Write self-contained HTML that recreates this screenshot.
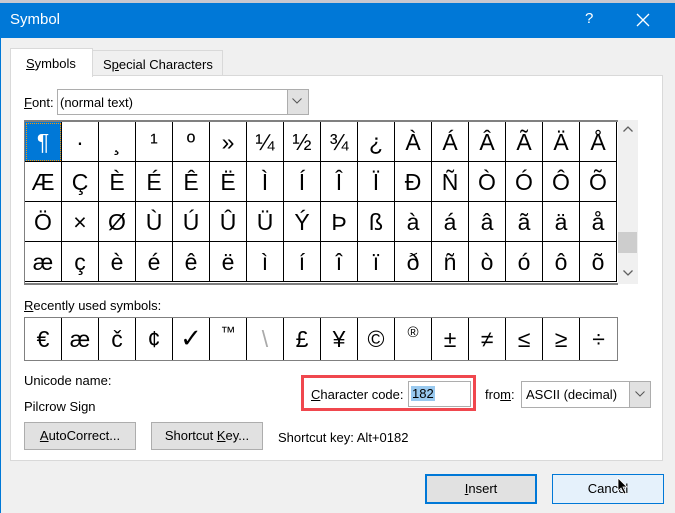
<!DOCTYPE html><html><head><meta charset="utf-8"><style>
*{box-sizing:border-box;margin:0;padding:0}
body{width:675px;height:513px;overflow:hidden;background:#f0f0f0;font-family:"Liberation Sans","DejaVu Sans",sans-serif;font-size:13px;color:#000;position:relative}
.a{position:absolute}
.tb{left:0;top:0;width:675px;height:38px;background:#0078d7;border-top:3px solid #c8c8d0}
.tt{color:#fff;font-size:15px;left:10px;top:11px}
.panel{left:10px;top:75px;width:653px;height:386px;background:#fff;border:1px solid #d9d9d9}
.grid{left:24px;top:120px;border-top:2px solid #808080;border-bottom:2px solid #808080;border-left:1px solid #808080}
.cell{position:absolute;border-right:1px solid #000;border-bottom:1px solid #000;width:37px;height:40px;text-align:center;font-family:"Liberation Sans","DejaVu Sans",sans-serif;font-size:23px;line-height:40px}
.btn{position:absolute;background:#e1e1e1;border:1px solid #adadad;text-align:center;line-height:26px;font-size:13px}
u{text-decoration:underline}
</style></head><body>
<div class="a tb"></div>
<div class="a tt">Symbol</div>
<div class="a" style="left:585px;top:10px;color:#fff;font-size:15px">?</div>
<svg class="a" style="left:636px;top:13px" width="14" height="14"><path d="M1 1L13 13M13 1L1 13" stroke="#fff" stroke-width="1.3"/></svg>
<div class="a" style="left:0;top:38px;width:1px;height:475px;background:#0078d7"></div>
<div class="a" style="left:92px;top:50px;width:131px;height:26px;background:#f0f0f0;border:1px solid #d9d9d9;border-bottom:none"></div>
<div class="a" style="left:103px;top:57px">S<u>p</u>ecial Characters</div>
<div class="a panel"></div>
<div class="a" style="left:10px;top:48px;width:83px;height:29px;background:#fff;border:1px solid #d9d9d9;border-bottom:none"></div>
<div class="a" style="left:26px;top:56px"><u>S</u>ymbols</div>
<div class="a" style="left:24px;top:95px"><u>F</u>ont:</div>
<div class="a" style="left:57px;top:89px;width:252px;height:26px;border:1px solid #adadad;background:#fff"></div>
<div class="a" style="left:60px;top:95px">(normal text)</div>
<div class="a" style="left:287px;top:90px;width:21px;height:24px;background:#e1e1e1;border-left:1px solid #adadad"></div>
<svg class="a" style="left:292px;top:98px" width="10" height="6"><path d="M0.5 0.5L5 5L9.5 0.5" fill="none" stroke="#555"/></svg>
<div class="a grid" style="width:594px;height:165px" id="g"></div>
<div class="a" style="left:618px;top:120px;width:20px;height:164px;background:#f0f0f0"></div>
<div class="a" style="left:618px;top:232px;width:19px;height:21px;background:#cdcdcd"></div>
<svg class="a" style="left:623px;top:126px" width="10" height="6"><path d="M0.5 5.5L5 1L9.5 5.5" fill="none" stroke="#606060" stroke-width="1.3"/></svg>
<svg class="a" style="left:623px;top:270px" width="10" height="6"><path d="M0.5 0.5L5 5L9.5 0.5" fill="none" stroke="#606060" stroke-width="1.3"/></svg>
<div class="a" style="left:24px;top:298px"><u>R</u>ecently used symbols:</div>
<div class="a" style="left:24px;top:317px;width:594px;height:44px;border:1px solid #808080" id="r"></div>
<div class="a" style="left:24px;top:373px">Unicode name:</div>
<div class="a" style="left:24px;top:399px">Pilcrow Sign</div>
<div class="btn" style="left:24px;top:422px;width:112px;height:28px"><u>A</u>utoCorrect...</div>
<div class="btn" style="left:151px;top:422px;width:112px;height:28px">Shortcut <u>K</u>ey...</div>
<div class="a" style="left:278px;top:430px">Shortcut key: Alt+0182</div>
<div class="a" style="left:301px;top:375px;width:175px;height:36px;border:3px solid #f0474e;background:#fff"></div>
<div class="a" style="left:311px;top:387px"><u>C</u>haracter code:</div>
<div class="a" style="left:408px;top:381px;width:63px;height:26px;border:1px solid #adadad;background:#fff"></div>
<div class="a" style="left:411px;top:386px;background:#99c9ef;padding:0 1px;line-height:15px">182</div>
<div class="a" style="left:485px;top:387px">fro<u>m</u>:</div>
<div class="a" style="left:521px;top:381px;width:130px;height:27px;border:1px solid #adadad;background:#fff"></div>
<div class="a" style="left:526px;top:387px">ASCII (decimal)</div>
<div class="a" style="left:629px;top:382px;width:21px;height:25px;background:#e1e1e1;border-left:1px solid #adadad"></div>
<svg class="a" style="left:635px;top:391px" width="10" height="6"><path d="M0.5 0.5L5 5L9.5 0.5" fill="none" stroke="#555"/></svg>
<div class="btn" style="left:425px;top:474px;width:112px;height:30px;border:2px solid #0078d7;line-height:26px"><u>I</u>nsert</div>
<div class="btn" style="left:552px;top:474px;width:112px;height:30px;background:#e5f1fb;border:1px solid #0078d7;line-height:28px">Cancel</div>
<svg class="a" style="left:617px;top:477px" width="12" height="18"><path d="M1 1L1 14L4 11L7 17L9 16L6 10L10 10Z" fill="#000" stroke="#fff" stroke-width="0.8"/></svg>
<script>
var rows=["¶·¸¹º»¼½¾¿ÀÁÂÃÄÅ","ÆÇÈÉÊËÌÍÎÏÐÑÒÓÔÕ","Ö×ØÙÚÛÜÝÞßàáâãäå","æçèéêëìíîïðñòóôõ"];
var g=document.getElementById('g'),h='';
rows.forEach(function(r,i){Array.from(r).forEach(function(c,j){
var s=(i==0&&j==0)?'background:#0078d7;color:#fff;outline:1px dotted #f90;outline-offset:-2px;':'';
h+='<div class="cell" style="left:'+(j*37)+'px;top:'+(i*40)+'px;'+s+'">'+c+'</div>';});});
g.innerHTML=h;
var rr="€æč¢✓™\\£¥©®±≠≤≥÷";h='';
Array.from(rr).forEach(function(c,j){var st=c=='\\'?'color:#aaa;':'';if(c=='™'||c=='®')st+='font-size:15px;line-height:30px;';if(c=='✓')st+='font-family:DejaVu Sans,sans-serif;font-size:26px;';
h+='<div class="cell" style="left:'+(j*37)+'px;top:0;height:42px;line-height:42px;border-bottom:none;'+(j==15?'border-right:none;':'')+st+'">'+c+'</div>';});
document.getElementById('r').innerHTML=h;
</script>
</body></html>
